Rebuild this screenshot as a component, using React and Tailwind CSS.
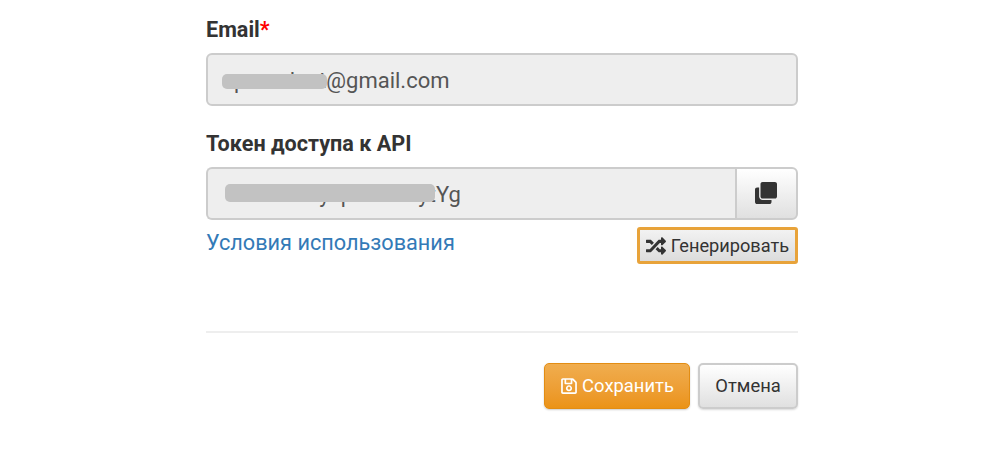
import { FaClone, FaRandom, FaRegSave } from "react-icons/fa";

// Grey smear that hides part of a value in the screenshot.
function Blur({ className }) {
  return <span className={`absolute rounded-[5px] bg-[#c2c2c2] ${className}`} />;
}

export default function App() {
  return (
    <div className="min-h-[449px] bg-white font-['Roboto',sans-serif] text-[#333]">
      <div className="ml-[206px] w-[592px] pt-[14px]">
        <label className="block text-[21.6px] leading-[32px] font-bold">
          Email<span className="text-[#f00]">*</span>
        </label>
        <div className="relative mt-[7px] flex h-[53px] items-center rounded-[6px] border-2 border-[#ccc] bg-[#eee] pt-[1px] pl-[26px] text-[22px] text-[#555]">
          pxxxxlost@gmail.com
          <Blur className="top-[19px] left-[14px] h-[15px] w-[105px]" />
        </div>

        <label className="mt-[22px] block text-[21.6px] leading-[32px] font-bold">Токен доступа к API</label>
        <div className="mt-[7px] flex h-[53px]">
          <div className="relative flex min-w-0 flex-1 items-center rounded-l-[6px] border-2 border-r-0 border-[#ccc] bg-[#eee] pt-[1px] pl-[24px] text-[22px] text-[#555]">
            xxxxxxxxyxpxxxxxxytYg
            <Blur className="top-[15px] left-[17px] h-[18px] w-[210px]" />
          </div>
          <button className="flex w-[63px] items-center justify-center rounded-r-[6px] border-2 border-[#ccc] bg-gradient-to-b from-white to-[#e0e0e0] pr-[2px] pb-[2px] text-[#333]">
            <FaClone className="text-[22px]" />
          </button>
        </div>

        <div className="flex items-start justify-between">
          <a href="#" className="mt-[6px] text-[21.7px] leading-[34px] text-[#337ab7]">
            Условия использования
          </a>
          <button className="mt-[7px] flex h-[37px] w-[161px] items-center justify-center gap-[5px] rounded-[3px] border-[3px] border-[#e8a33a] bg-gradient-to-b from-[#f2f2f2] to-[#dcdcdc] text-[18.2px] text-[#333]">
            <FaRandom className="text-[20px]" />
            Генерировать
          </button>
        </div>

        <hr className="mt-[67px] border-t-2 border-[#eee]" />

        <div className="mt-[30px] flex justify-end gap-[8px]">
          <button className="flex h-[46px] w-[146px] items-center justify-center gap-[4px] rounded-[5px] border border-[#e38d13] bg-gradient-to-b from-[#f0ad4e] to-[#eb9316] pb-[1px] text-[18.4px] text-white shadow-[0_1px_2px_rgba(0,0,0,0.2)]">
            <FaRegSave className="text-[18px]" />
            Сохранить
          </button>
          <button className="h-[46px] w-[100px] rounded-[5px] border-2 border-[#ccc] bg-gradient-to-b from-white to-[#e0e0e0] pb-[1px] text-[18.4px] text-[#333] shadow-[0_1px_2px_rgba(0,0,0,0.15)]">
            Отмена
          </button>
        </div>
      </div>
    </div>
  );
}
